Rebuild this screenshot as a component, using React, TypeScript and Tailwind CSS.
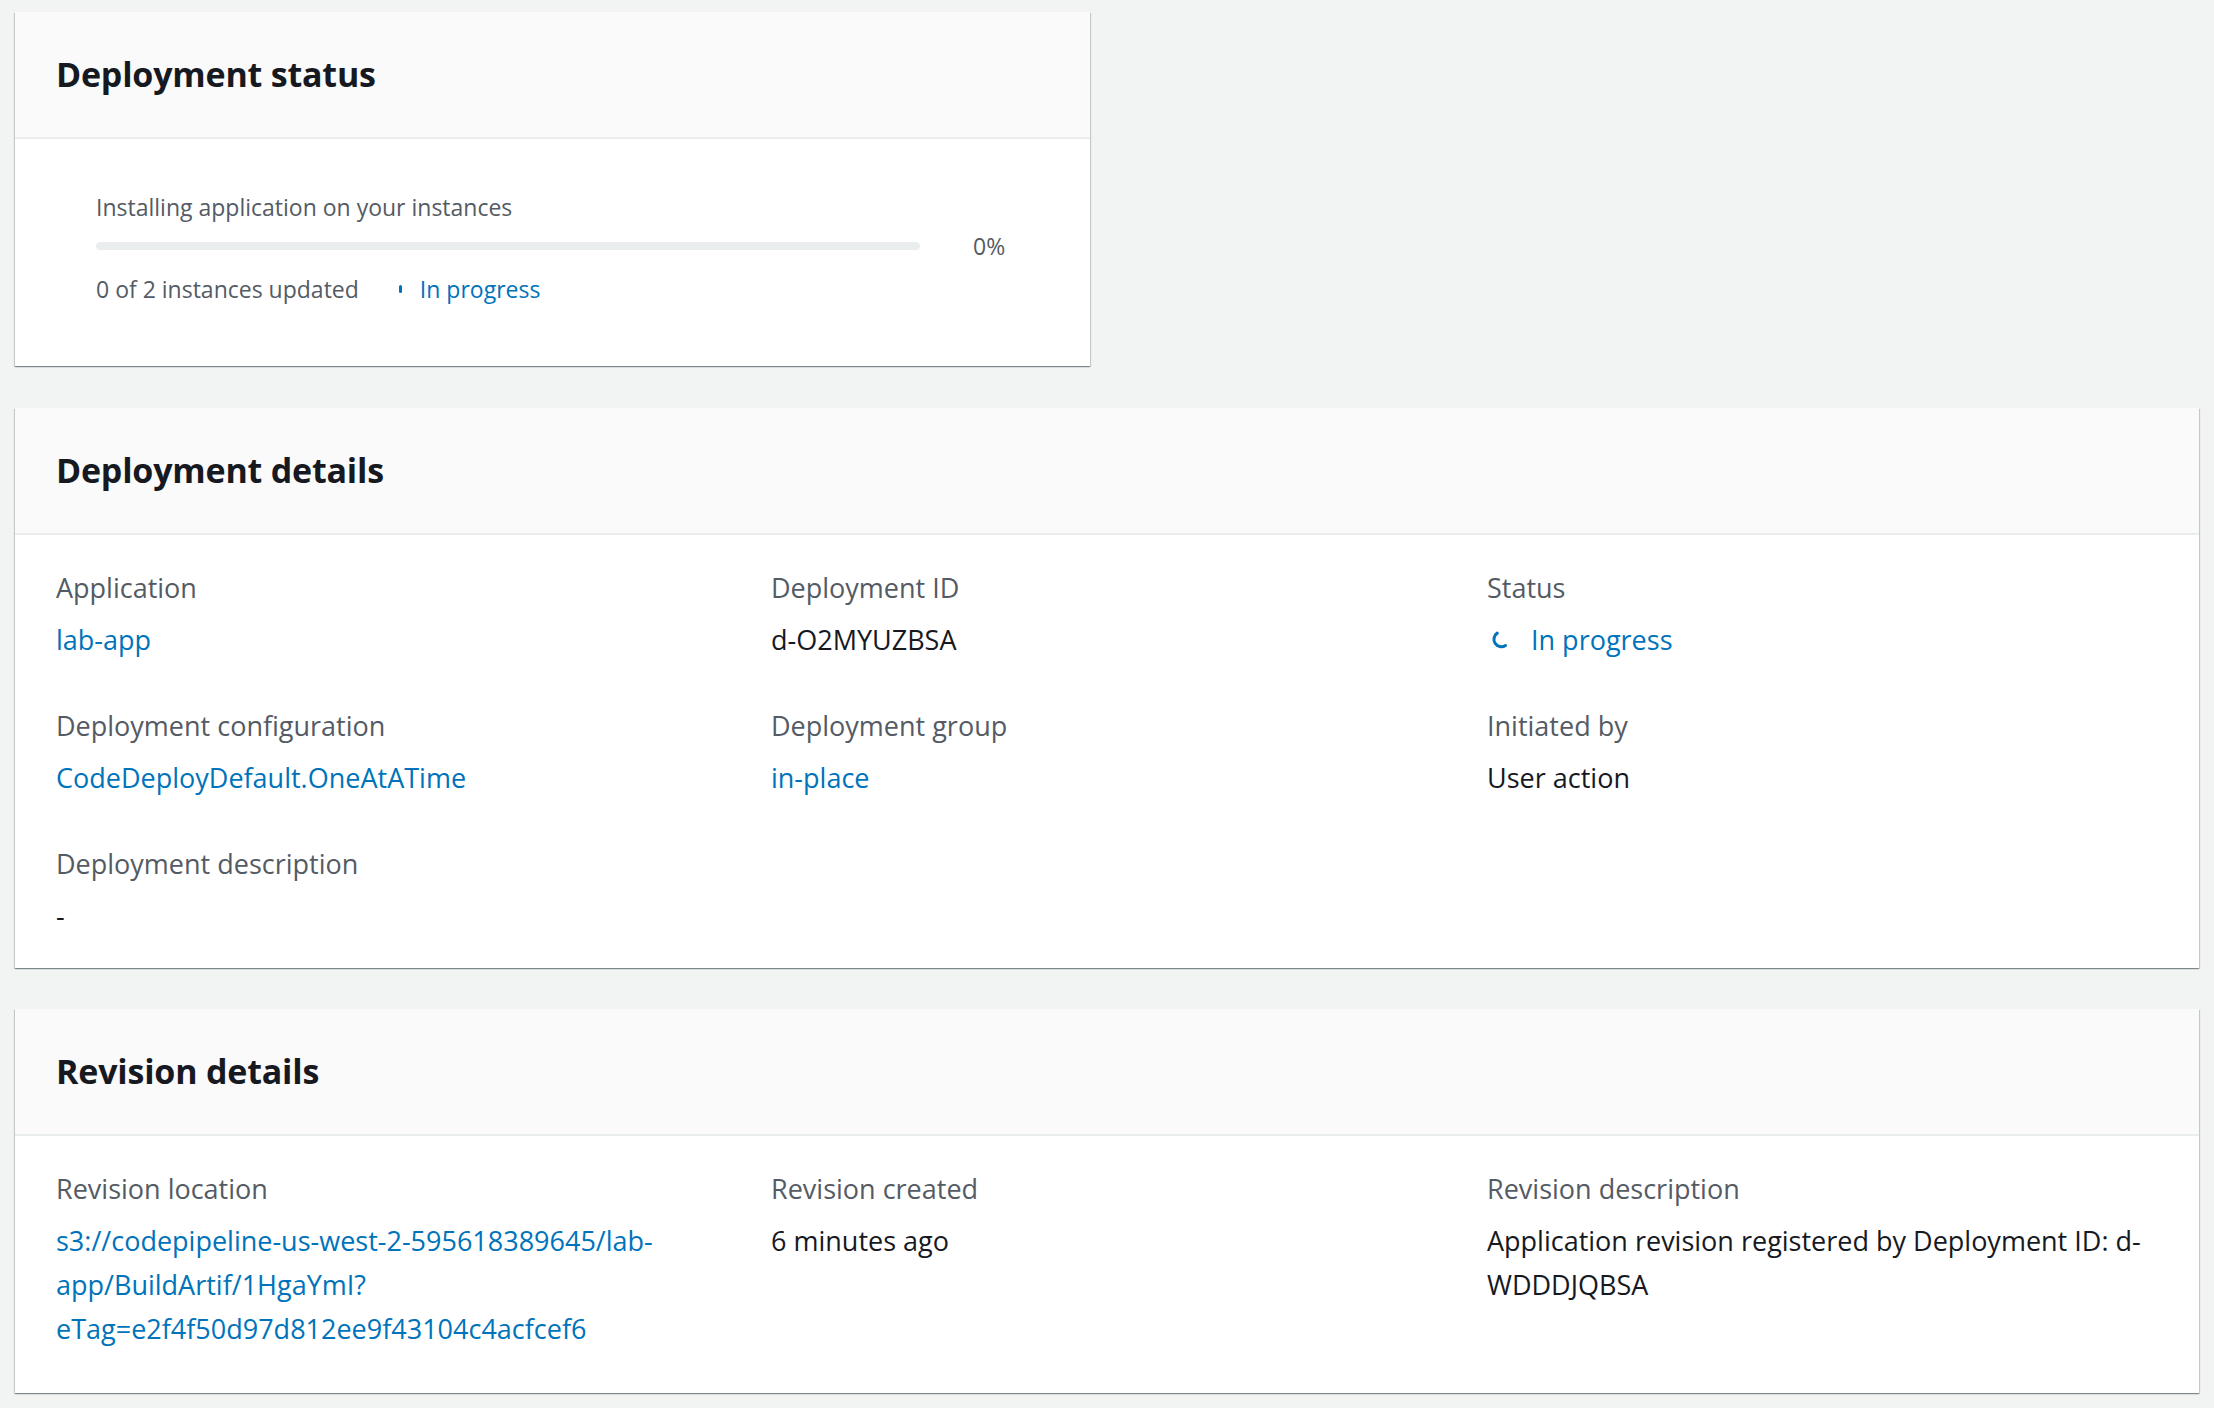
import React from "react";

const F = { fontFamily: '"Open Sans", "Noto Sans", sans-serif' };

function Card({ title, w, children }: { title: string; w: string; children: React.ReactNode }) {
  return (
    <div className={`${w} bg-white shadow-[0_1px_1px_0_rgba(0,28,36,0.3),1px_1px_1px_0_rgba(0,28,36,0.15),-1px_1px_1px_0_rgba(0,28,36,0.15)]`}>
      <div className="h-[127px] bg-[#fafafa] border-b-2 border-[#eaeded] flex items-center px-[41px]">
        <h2 className="text-[34px] font-bold text-[#16191f] tracking-[-0.2px]">{title}</h2>
      </div>
      {children}
    </div>
  );
}

function Item({ label, children }: { label: string; children: React.ReactNode }) {
  return (
    <div className="flex flex-col">
      <div className="text-[27px] leading-[44px] text-[#545b64]">{label}</div>
      <div className="text-[27px] leading-[44px] text-[#16191f] mt-[8px]">{children}</div>
    </div>
  );
}

const Link = ({ children }: { children: React.ReactNode }) => <span className="text-[#0073bb]">{children}</span>;

export default function App() {
  return (
    <div style={F} className="w-[2214px] h-[1408px] bg-[#f2f3f3] pt-[12px] px-[15px] flex flex-col">
      <Card title="Deployment status" w="w-[1075px]">
        <div className="h-[227px] px-[81px] pt-[52px]">
          <div className="text-[23px] leading-[32px] text-[#545b64]">Installing application on your instances</div>
          <div className="flex items-center mt-[6px]">
            <div className="w-[824px] h-[8px] rounded bg-[#eaeded]" />
            <div className="ml-[53px] text-[23px] text-[#545b64]">0%</div>
          </div>
          <div className="flex items-center text-[23px] text-[#545b64] mt-[8px]">
            <span>0 of 2 instances updated</span>
            <span className="ml-[40px] w-[3px] h-[8px] bg-[#0073bb] rounded-sm" />
            <span className="ml-[18px] text-[#0073bb]">In progress</span>
          </div>
        </div>
      </Card>
      <div className="h-[42px]" />
      <Card title="Deployment details" w="w-full">
        <div className="grid grid-cols-[715px_716px_1fr] px-[41px] pt-[31px] pb-[26px] gap-y-[38px] h-[433px]">
          <Item label="Application"><Link>lab-app</Link></Item>
          <Item label="Deployment ID">d-O2MYUZBSA</Item>
          <Item label="Status">
            <span className="flex items-center text-[#0073bb]">
              <svg width="22" height="22" viewBox="0 0 16 16" className="mr-[20px] ml-[2px]">
                <path d="M6 3 A5 5 0 0 0 12 12" fill="none" stroke="#0073bb" strokeWidth="2.2" strokeLinecap="round" />
              </svg>
              In progress
            </span>
          </Item>
          <Item label="Deployment configuration"><Link>CodeDeployDefault.OneAtATime</Link></Item>
          <Item label="Deployment group"><Link>in-place</Link></Item>
          <Item label="Initiated by">User action</Item>
          <Item label="Deployment description">-</Item>
        </div>
      </Card>
      <div className="h-[41px]" />
      <Card title="Revision details" w="w-full">
        <div className="grid grid-cols-[715px_716px_1fr] px-[41px] pt-[31px] h-[257px]">
          <Item label="Revision location">
            <Link>s3://codepipeline-us-west-2-595618389645/lab-<br />app/BuildArtif/1HgaYmI?<br />eTag=e2f4f50d97d812ee9f43104c4acfcef6</Link>
          </Item>
          <Item label="Revision created">6 minutes ago</Item>
          <Item label="Revision description">Application revision registered by Deployment ID: d-<br />WDDDJQBSA</Item>
        </div>
      </Card>
    </div>
  );
}
